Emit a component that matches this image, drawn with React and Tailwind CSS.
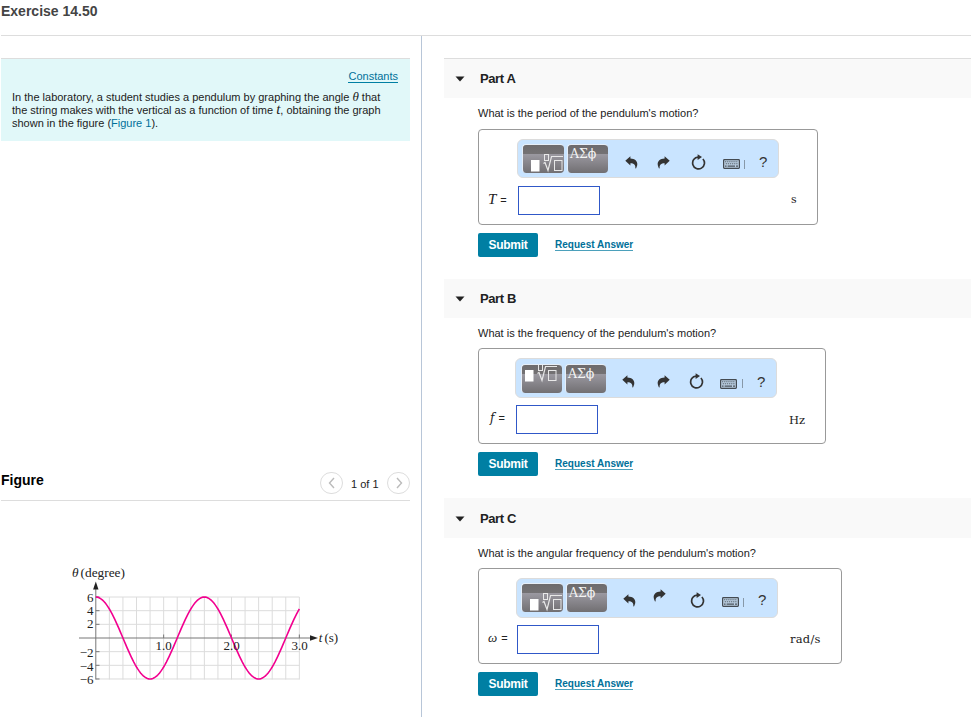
const CURVE = Array.from({ length: 151 }, (_, i) => {
  const t = i * 0.02;
  const x = 95.8 + t * 67.85;
  const y = 78 - 6 * 6.83 * Math.cos((2 * Math.PI * t) / 1.6);
  return `${x.toFixed(2)},${y.toFixed(2)}`;
}).join(" ");

const V_LINES = Array.from({ length: 15 }, (_, i) => 95.8 + (i + 1) * 13.57);
const H_LINES = [-6, -4, -2, 2, 4, 6].map((v) => 78 - v * 6.83);

function Graph() {
  return (
    <svg width="410" height="140" viewBox="0 0 410 140" className="block">
      <g stroke="#dcdcdc" strokeWidth="1">
        {V_LINES.map((x) => (
          <line key={x} x1={x} x2={x} y1="37" y2="119.5" />
        ))}
        {H_LINES.map((y) => (
          <line key={y} x1="95.8" x2="299.4" y1={y} y2={y} />
        ))}
      </g>
      <g stroke="#777" strokeWidth="1">
        <line x1="95.8" x2="95.8" y1="28" y2="119.5" />
        <line x1="79" x2="313" y1="78" y2="78" />
        {H_LINES.map((y) => (
          <line key={y} x1="95.8" x2="99.5" y1={y} y2={y} />
        ))}
        {[163.65, 231.5, 299.35].map((x) => (
          <line key={x} x1={x} x2={x} y1="74.5" y2="78" />
        ))}
      </g>
      <path d="M95.8 21.5 L98.5 29.5 H93.1 Z" fill="#222" />
      <path d="M318 78 L310 75.2 V80.8 Z" fill="#222" />
      <polyline points={CURVE} fill="none" stroke="#f2008f" strokeWidth="1.6" />
      <g fontFamily="'Liberation Serif', serif" fontSize="13" fill="#222">
        <text x="72" y="16.5" textLength="53" lengthAdjust="spacingAndGlyphs">
          <tspan fontStyle="italic">θ</tspan>
          <tspan dx="2">(degree)</tspan>
        </text>
        <g textAnchor="end">
          <text x="93.5" y="41.5">6</text>
          <text x="93.5" y="55">4</text>
          <text x="93.5" y="68">2</text>
          <text x="93.5" y="97">−2</text>
          <text x="93.5" y="110.5">−4</text>
          <text x="93.5" y="124">−6</text>
        </g>
        <g textAnchor="middle">
          <text x="163.7" y="90">1.0</text>
          <text x="231.7" y="90">2.0</text>
          <text x="299.5" y="90">3.0</text>
        </g>
        <text x="318.8" y="81.5">
          <tspan fontStyle="italic">t</tspan>
          <tspan dx="2">(s)</tspan>
        </text>
      </g>
    </svg>
  );
}

function CurvedArrow({ className }) {
  return (
    <svg width="13" height="13" viewBox="0 0 13 13" className={className}>
      <path
        d="M0.3 4.8 L5.4 0.3 V2.6 C9.9 2.7 12.6 5.2 12.3 8.6 C12.2 10.2 11.6 11.3 11 12.4 L10.3 12.2 C10.7 8.8 9 7.4 5.4 7.3 V9.6 Z"
        fill="#333"
      />
    </svg>
  );
}

function Reset({ className }) {
  return (
    <svg width="15" height="16" viewBox="0 0 15 16" className={className}>
      <path d="M11.9 5 A5.9 5.9 0 1 1 7.2 3.1" fill="none" stroke="#333" strokeWidth="1.7" />
      <path d="M6.6 0.2 L11 3.1 L6.6 5.9 Z" fill="#333" />
    </svg>
  );
}

function Keyboard({ className }) {
  return (
    <svg width="17" height="10" viewBox="0 0 17 10" className={className}>
      <rect x="0.6" y="0.6" width="15.8" height="8.8" rx="0.8" fill="#b9cde0" stroke="#444b52" strokeWidth="1.2" />
      <path d="M2 2.8 H15 M2.7 4.8 H14.6" stroke="#5d6872" strokeWidth="1.1" strokeDasharray="1.3 0.8" />
      <path d="M2 7.1 H3.6 M4.6 7.1 H12 M13 7.1 H15" stroke="#4c555e" strokeWidth="1.1" />
    </svg>
  );
}

/* White block beside an nth-root sign with an empty radicand. */
function RootTemplate({ className }) {
  return (
    <svg width="34" height="20" viewBox="0 0 34 20" className={className}>
      <rect x="0" y="7" width="8.5" height="11.5" fill="#fff" />
      <g fill="none" stroke="#e8e8e8" strokeWidth="1">
        <rect x="13.5" y="1.5" width="4" height="6" />
        <path d="M12.5 10.5 L14 9.5 L17 17.5 L20.5 3.5 H32" strokeWidth="1.2" />
        <rect x="23.5" y="7.5" width="7.5" height="10" />
      </g>
    </svg>
  );
}

const BUTTON =
  "h-[29px] shrink-0 overflow-hidden rounded-[4px] border-t border-l border-[#e6eef7] bg-[linear-gradient(to_bottom,#6d6b6d_0px,#747274_9px,#9b99a1_9px,#716f72_100%)]";

function Part({ part }) {
  return (
    <section className={part.section}>
      <header className={`flex items-center bg-[#f9f9f9] ${part.header}`}>
        <svg width="10" height="6" viewBox="0 0 10 6" className="ml-[11px]">
          <path d="M0.5 0.5 H9.5 L5 5.5 Z" fill="#222" />
        </svg>
        <h2 className="ml-[15px] text-[13px] leading-4 font-bold tracking-[-0.03em] text-[#222]">{part.title}</h2>
      </header>
      <p className={`ml-[34px] text-[11px] leading-[14px] whitespace-nowrap text-[#222] ${part.question}`}>
        {part.text}
      </p>
      <div className={`ml-[34px] h-24 rounded-[4px] border border-[#999] ${part.box}`}>
        <div className={`flex w-[262px] items-start rounded-[6px] border border-[#dcdcdc] bg-[#c9e4ff] ${part.toolbar}`}>
          <button className={`${BUTTON} ${part.first}`}>
            <RootTemplate className={part.root} />
          </button>
          <button
            className={`${BUTTON} flex w-[41px] items-start pt-px pl-[2px] font-['DejaVu_Serif',serif] text-[12.5px] leading-[15px] text-[#f4f4f4] ${part.greek}`}
          >
            <span>ΑΣϕ</span>
          </button>
          <CurvedArrow className={`shrink-0 ${part.undo}`} />
          <CurvedArrow className={`shrink-0 -scale-x-100 ${part.redo}`} />
          <Reset className={`shrink-0 ${part.reset}`} />
          <Keyboard className={`shrink-0 ${part.keyboard}`} />
          <span className={`h-[9px] w-px shrink-0 bg-[#8798a8] ${part.divider}`} />
          <span className={`text-[15px] leading-[18px] text-[#333] ${part.help}`}>?</span>
        </div>
        <div className={`flex items-center ${part.row}`}>
          <div className={`flex items-baseline pb-[3px] text-[#222] ${part.label}`}>
            <i className={part.symbolStyle}>{part.symbol}</i>
            <span className="ml-1 text-[11px] leading-4">=</span>
          </div>
          <input className="h-[29px] w-[82px] shrink-0 border border-[#3058c8] bg-white" />
          <span className={`font-['DejaVu_Serif',serif] leading-4 text-[#222] ${part.unitStyle}`}>{part.unit}</span>
        </div>
      </div>
      <div className="mt-2 ml-[34px] flex h-6 items-center">
        <button className="h-6 w-[60px] rounded-[2px] bg-[#007fa3] text-[12px] leading-6 font-bold tracking-[-0.02em] text-white">
          Submit
        </button>
        <a className="ml-[17px] border-b border-[#4ba0bb] text-[10px] leading-[11px] font-bold tracking-[0.002em] whitespace-nowrap text-[#007099]">
          Request Answer
        </a>
      </div>
    </section>
  );
}

const PARTS = [
  {
    title: "Part A",
    text: "What is the period of the pendulum's motion?",
    symbol: "T",
    unit: "s",
    section: "mt-[22px]",
    header: "h-10 border-t border-[#ddd]",
    question: "mt-2",
    box: "mt-[9px] w-[340px]",
    toolbar: "mt-[9px] ml-[38px] h-[39px]",
    first: "mt-1 ml-[4px] w-[42px]",
    root: "mt-[7px] ml-[8px]",
    greek: "mt-1 ml-[3px]",
    undo: "mt-[16px] ml-[17px]",
    redo: "mt-[16px] ml-[19px]",
    reset: "mt-[14px] ml-[21px]",
    keyboard: "mt-[19px] ml-[17px]",
    divider: "mt-[20px] ml-[4px]",
    help: "mt-[13px] ml-[14px]",
    row: "mt-[8px]",
    label: "w-[39px] pl-[9px]",
    symbolStyle: "font-['Liberation_Serif',serif] text-[15px] leading-4",
    unitStyle: "ml-[191px] pb-px text-[11px]",
  },
  {
    title: "Part B",
    text: "What is the frequency of the pendulum's motion?",
    symbol: "f",
    unit: "Hz",
    section: "mt-[22px]",
    header: "h-[39px]",
    question: "mt-2",
    box: "mt-[8px] w-[348px]",
    toolbar: "mt-[9px] ml-[36px] h-10",
    first: "flex items-start mt-[5px] ml-[5px] w-[41px]",
    root: "-mt-[2px] ml-[3px]",
    greek: "mt-[5px] ml-[3px]",
    undo: "mt-[16px] ml-[16px]",
    redo: "mt-[16px] ml-[22px]",
    reset: "mt-[14px] ml-[19px]",
    keyboard: "mt-[20px] ml-[16px]",
    divider: "mt-[20px] ml-[5px]",
    help: "mt-[14px] ml-[14px]",
    row: "mt-[7px]",
    label: "w-[37px] pl-[11px]",
    symbolStyle: "font-['DejaVu_Serif',serif] text-[12px] leading-4",
    unitStyle: "ml-[191px] text-[11.5px]",
  },
  {
    title: "Part C",
    text: "What is the angular frequency of the pendulum's motion?",
    symbol: "ω",
    unit: "rad/s",
    section: "mt-[22px]",
    header: "h-10 pt-px",
    question: "mt-2",
    box: "mt-[8px] w-[364px]",
    toolbar: "mt-[9px] ml-[37px] h-10",
    first: "mt-1 ml-[4px] w-[42px]",
    root: "mt-[7px] ml-[8px]",
    greek: "mt-1 ml-[3px]",
    undo: "mt-[15px] ml-[16px]",
    redo: "mt-[10px] ml-[17px]",
    reset: "mt-[13px] ml-[24px]",
    keyboard: "mt-[18px] ml-[17px]",
    divider: "mt-[19px] ml-[4px]",
    help: "mt-[12px] ml-[14px]",
    row: "mt-[7px]",
    label: "w-[38px] pl-[9px]",
    symbolStyle: "font-['Liberation_Serif',serif] text-[13px] leading-4",
    unitStyle: "ml-[191px] pb-[2px] text-[11.5px] tracking-[0.02em]",
  },
];

function PagerButton({ path }) {
  return (
    <button className="flex h-[22px] w-[23px] items-center justify-center rounded-full border border-[#ddd]">
      <svg width="8" height="12" viewBox="0 0 8 12">
        <path d={path} fill="none" stroke="#bbb" strokeWidth="1.4" />
      </svg>
    </button>
  );
}

export default function App() {
  return (
    <div className="flex h-[717px] w-[971px] flex-col overflow-hidden bg-white font-['Liberation_Sans',Arial,sans-serif] text-[#222]">
      <header className="ml-px h-9 shrink-0 border-b border-[#ddd]">
        <h1 className="pt-[3px] text-[14px] leading-4 font-bold text-[#444]">Exercise 14.50</h1>
      </header>
      <div className="flex min-h-0 flex-1">
        <aside className="w-[422px] shrink-0 border-r border-[#b8c6d8] pl-px">
          <div className="mt-[22px] h-[83px] w-[409px] border-t border-[#ddd] bg-[#e1f8f9] pr-[12px] pl-[11px]">
            <div className="flex justify-end pt-[12px]">
              <a className="border-b border-[#007fa3] text-[11px] leading-[11px] text-[#007099]">Constants</a>
            </div>
            <div className="mt-[8px] text-[11px] leading-[13px] whitespace-nowrap">
              <p>
                In the laboratory, a student studies a pendulum by graphing the angle{" "}
                <i className="inline-block h-[11px] font-['Liberation_Serif',serif] text-[13px] leading-[11px]">θ</i> that
              </p>
              <p>
                the string makes with the vertical as a function of time{" "}
                <i className="inline-block h-[11px] font-['Liberation_Serif',serif] text-[15px] leading-[11px]">t</i>,{" "}
                obtaining the graph
              </p>
              <p>
                shown in the figure (<a className="text-[#007099]">Figure 1</a>).
              </p>
            </div>
          </div>
          <div className="mt-[330px] flex h-[30px] w-[409px] border-b border-[#ddd]">
            <h2 className="text-[14px] leading-[19px] font-bold text-black">Figure</h2>
            <div className="ml-auto flex h-[22px] items-center pt-px">
              <PagerButton path="M6 1 L1.5 6 L6 11" />
              <span className="mr-[8px] ml-[8px] w-[28px] pt-[2px] text-[11px] leading-4 whitespace-nowrap">1 of 1</span>
              <PagerButton path="M2 1 L6.5 6 L2 11" />
            </div>
          </div>
          <div className="mt-[59px] -ml-px">
            <Graph />
          </div>
        </aside>
        <main className="ml-[22px] flex-1">
          {PARTS.map((part) => (
            <Part key={part.title} part={part} />
          ))}
        </main>
      </div>
    </div>
  );
}
